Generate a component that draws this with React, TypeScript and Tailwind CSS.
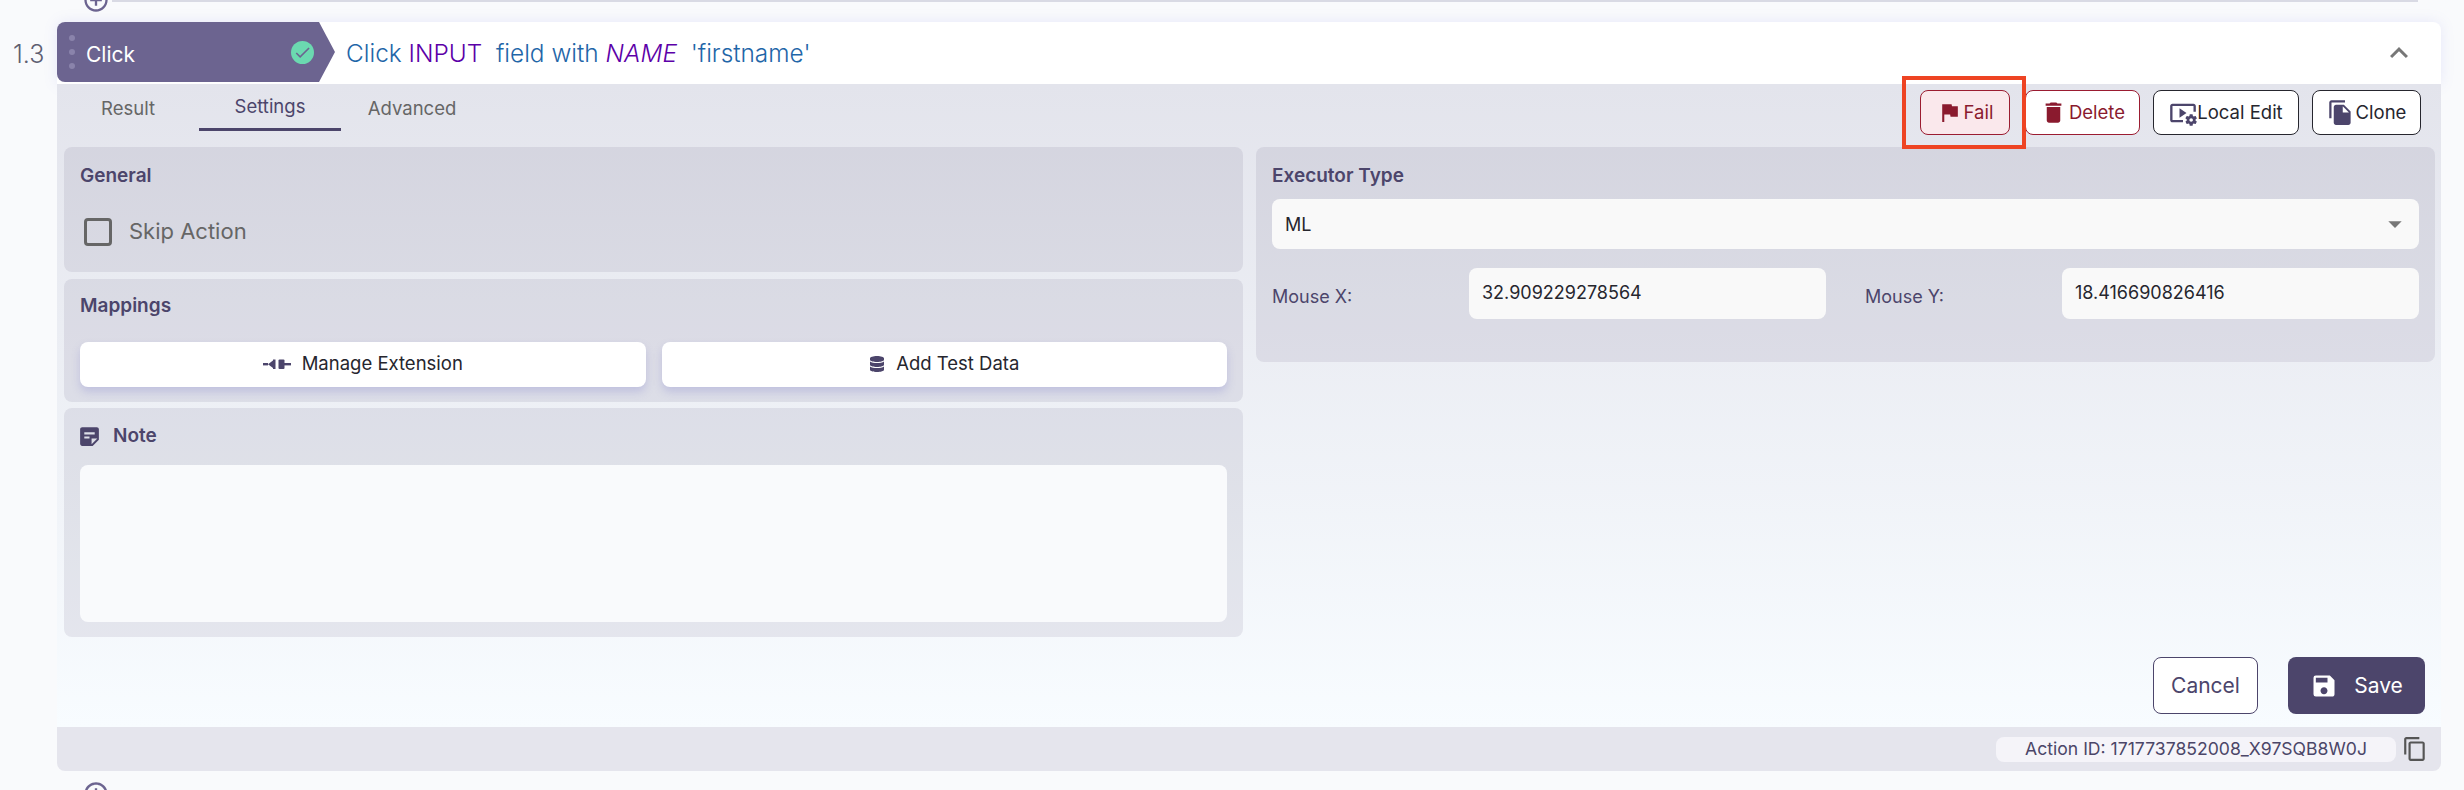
import { useState } from 'react';
import {
    MdAddCircleOutline,
    MdArrowDropDown,
    MdCheck,
    MdDelete,
    MdExpandLess,
    MdFileCopy,
    MdFlag,
    MdOutlineContentCopy,
    MdOutlineVideoSettings,
    MdSave,
    MdStickyNote2,
} from 'react-icons/md';
import { FaDatabase } from 'react-icons/fa';

const tabs = ['Result', 'Settings', 'Advanced'];

function PlugIcon() {
    return (
        <svg width="28" height="14" viewBox="0 0 28 14" fill="#4c456b">
            <rect x="0" y="6" width="5" height="2.4" />
            <path d="M5 7.2 10 3.5V11Z" />
            <rect x="10" y="2.5" width="2.5" height="9.5" />
            <rect x="15.5" y="2.5" width="6" height="9.5" rx="1" />
            <rect x="21" y="6" width="7" height="2.4" />
        </svg>
    );
}

function ActionButton({
    icon,
    label,
    className,
}: {
    icon: React.ReactNode;
    label: string;
    className: string;
}) {
    return (
        <button className={`flex h-[45px] items-center justify-center rounded-lg border text-[18.5px] ${className}`}>
            {icon}
            {label}
        </button>
    );
}

function Card({ title, className, children }: { title: React.ReactNode; className: string; children: React.ReactNode }) {
    return (
        <div className={`rounded-lg bg-[#4c456b]/[0.1] px-4 ${className}`}>
            <div className="flex h-[22px] items-center text-[19px] font-semibold text-[#4c456b]">{title}</div>
            {children}
        </div>
    );
}

function WideButton({ icon, label }: { icon: React.ReactNode; label: string }) {
    return (
        <button className="flex h-[45px] items-center justify-center gap-[11px] rounded-lg bg-white text-[18.5px] text-[#26262e] shadow-[0_5px_9px_rgba(110,110,200,0.25)]">
            {icon}
            {label}
        </button>
    );
}

export default function App() {
    const [activeTab] = useState('Settings');

    return (
        <div className="relative h-[790px] w-[2464px] overflow-hidden bg-[#f9fafc] font-['Inter',sans-serif]">
            <div className="relative h-[22px]">
                <div className="ml-[112px] h-[2px] w-[2306px] bg-[#d9dae4]" />
                <MdAddCircleOutline className="absolute left-[82px] top-[-14px] text-[#6c6490]" size={28} />
            </div>

            <div className="flex">
                <div className="w-[57px] pt-[22px] pl-[13px] text-[25px] leading-[20px] font-light text-[#5f5f72]">1.3</div>
                <div className="w-[2384px]">
                    <div className="flex h-[62px] rounded-t-lg bg-white shadow-[0_0_14px_rgba(130,130,230,0.15)]">
                        <div className="flex h-[60px] w-[278px] items-center rounded-l-lg bg-[#6c6490] pl-[12px] [clip-path:polygon(0_0,262px_0,278px_50%,262px_100%,0_100%)]">
                            <div className="flex h-[36px] flex-col justify-between py-[1px]">
                                <span className="h-[6px] w-[6px] rounded-full bg-[#8a83ab]" />
                                <span className="h-[6px] w-[6px] rounded-full bg-[#8a83ab]" />
                                <span className="h-[6px] w-[6px] rounded-full bg-[#8a83ab]" />
                            </div>
                            <span className="mt-[6px] ml-[11px] text-[21px] text-white">Click</span>
                            <span className="ml-auto mr-[21px] flex h-[23px] w-[23px] items-center justify-center rounded-full bg-[#6bd9b0]">
                                <MdCheck className="text-[#6c6490]" size={19} />
                            </span>
                        </div>
                        <div className="ml-[11px] flex items-center text-[24.4px] font-light whitespace-pre text-[#1f66a8]">
                            Click <span className="text-[#5c00a8]">INPUT</span>  field with{' '}
                            <span className="text-[#5c00a8] italic">NAME</span>  'firstname'
                        </div>
                        <MdExpandLess className="mt-[13px] ml-auto mr-[24px] text-[#777]" size={36} />
                    </div>

                    <div className="bg-gradient-to-b from-[#e3e4ec] to-[#f8fcff]">
                        <div className="flex h-[63px] items-start justify-between pr-[20px]">
                            <div className="flex">
                                {tabs.map((tab) => (
                                    <div
                                        key={tab}
                                        className={`flex h-[47px] w-[142px] items-center justify-center pt-[2px] text-[18.5px] ${
                                            activeTab === tab
                                                ? 'border-b-[3px] border-[#4c456b] text-[#4c456b]'
                                                : 'text-[#666]'
                                        }`}
                                    >
                                        {tab}
                                    </div>
                                ))}
                            </div>
                            <div className="flex gap-[13px] pt-[6px]">
                                <div className="relative mr-[2px]">
                                    <ActionButton
                                        icon={<MdFlag className="mr-[2px]" size={25} />}
                                        label="Fail"
                                        className="w-[90px] border-[#9b1c31] bg-[#fae8ec] text-[#8a1a2e]"
                                    />
                                    <div className="absolute top-[-14px] right-[-16px] bottom-[-14px] left-[-18px] border-4 border-[#ee4423]" />
                                </div>
                                <ActionButton
                                    icon={<MdDelete className="mr-[2px]" size={27} />}
                                    label="Delete"
                                    className="w-[115px] border-[#9b1c31] bg-white text-[#8a1a2e]"
                                />
                                <ActionButton
                                    icon={<MdOutlineVideoSettings className="text-[#4c456b]" size={28} />}
                                    label="Local Edit"
                                    className="w-[146px] border-[#26262e] bg-white text-[#26262e]"
                                />
                                <ActionButton
                                    icon={<MdFileCopy className="mr-[2px] text-[#4c456b]" size={27} />}
                                    label="Clone"
                                    className="w-[109px] border-[#26262e] bg-white text-[#26262e]"
                                />
                            </div>
                        </div>

                        <div className="grid grid-cols-2 items-start gap-x-[13px] pr-[6px] pl-[7px]">
                            <div className="flex flex-col gap-[6.5px]">
                                <Card title="General" className="h-[125px] pt-[18px]">
                                    <label className="mt-[28px] flex items-center gap-[17px] pl-[4px] text-[22px] text-[#666]">
                                        <span className="h-[28px] w-[28px] rounded-[4px] border-[3px] border-[#666]" />
                                        Skip Action
                                    </label>
                                </Card>
                                <Card title="Mappings" className="h-[123px] pt-[17px]">
                                    <div className="mt-[24px] grid grid-cols-2 gap-[16px]">
                                        <WideButton icon={<PlugIcon />} label="Manage Extension" />
                                        <WideButton icon={<FaDatabase className="text-[#4c456b]" size={16} />} label="Add Test Data" />
                                    </div>
                                </Card>
                                <Card
                                    title={
                                        <>
                                            <MdStickyNote2 className="mr-[11px] -ml-[3px]" size={25} />
                                            Note
                                        </>
                                    }
                                    className="h-[229px] pt-[17px]"
                                >
                                    <textarea readOnly className="mt-[18px] block h-[157px] w-full resize-none rounded-lg bg-[#f9fafc]" />
                                </Card>
                            </div>

                            <Card title="Executor Type" className="h-[215px] pt-[18px]">
                                <div className="mt-[12px] flex h-[50px] items-center justify-between rounded-lg bg-[#f9f9f9] pr-[8px] pl-[13px] text-[18px] text-[#26262e]">
                                    ML
                                    <MdArrowDropDown className="text-[#777]" size={32} />
                                </div>
                                <div className="mt-[19px] grid grid-cols-[197px_357px_39px_197px_1fr] items-center">
                                    <span className="pt-[6px] text-[18px] text-[#4c456b]">Mouse X:</span>
                                    <input
                                        readOnly
                                        value="32.909229278564"
                                        className="h-[51px] rounded-lg bg-[#f9f9f9] pb-[2px] pl-[13px] text-[18px] text-[#26262e]"
                                    />
                                    <span />
                                    <span className="pt-[6px] text-[18px] text-[#4c456b]">Mouse Y:</span>
                                    <input
                                        readOnly
                                        value="18.416690826416"
                                        className="h-[51px] w-full rounded-lg bg-[#f9f9f9] pb-[2px] pl-[13px] text-[18px] text-[#26262e]"
                                    />
                                </div>
                            </Card>
                        </div>

                        <div className="flex justify-end gap-[30px] pt-[20px] pr-[16px] pb-[13px]">
                            <button className="h-[57px] w-[105px] rounded-lg border border-[#4c456b] bg-white text-[21px] text-[#4c456b]">
                                Cancel
                            </button>
                            <button className="flex h-[57px] w-[137px] items-center justify-center gap-[16px] rounded-lg bg-[#4c456b] text-[21px] text-white">
                                <MdSave size={28} />
                                Save
                            </button>
                        </div>
                    </div>

                    <div className="flex h-[44px] items-center justify-end gap-[6px] rounded-b-lg bg-[#e5e5ed] pr-[13px]">
                        <div className="flex h-[25px] w-[400px] items-center justify-center rounded-lg bg-[#f5f4f9] text-[17.6px] text-[#4b4668]">
                            Action ID: 1717737852008_X97SQB8W0J
                        </div>
                        <MdOutlineContentCopy className="text-[#555]" size={26} />
                    </div>
                </div>
            </div>

            <MdAddCircleOutline className="absolute top-[780px] left-[82px] text-[#6c6490]" size={28} />
        </div>
    );
}
